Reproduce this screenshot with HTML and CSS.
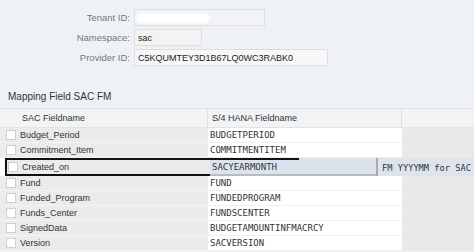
FILE: index.html
```html
<!DOCTYPE html>
<html lang="en">

<head>
    <meta charset="UTF-8">
    <title>Mapping Field SAC FM</title>
    <link rel="stylesheet" href="styles.css">
</head>

<body>
    <main>
        <section class="form">
            <div class="field">
                <label>Tenant ID:</label>
                <span class="input tenant"><span class="blur"></span></span>
            </div>
            <div class="field">
                <label>Namespace:</label>
                <span class="input namespace">sac</span>
            </div>
            <div class="field">
                <label>Provider ID:</label>
                <span class="input provider">C5KQUMTEY3D1B67LQ0WC3RABK0</span>
            </div>
        </section>

        <h1>Mapping Field SAC FM</h1>

        <section class="grid">
            <div class="row head">
                <div class="cell">SAC Fieldname</div>
                <div class="cell">S/4 HANA Fieldname</div>
                <div class="cell"></div>
            </div>
            <div class="row">
                <div class="cell"><i class="box"></i>Budget_Period</div>
                <div class="cell code">BUDGETPERIOD</div>
                <div class="cell"></div>
            </div>
            <div class="row">
                <div class="cell"><i class="box"></i>Commitment_Item</div>
                <div class="cell code">COMMITMENTITEM</div>
                <div class="cell"></div>
            </div>
            <div class="row edit">
                <div class="cell"><i class="box"></i>Created_on</div>
                <div class="cell code">SACYEARMONTH</div>
                <div class="cell code">FM YYYYMM for SAC</div>
            </div>
            <div class="row">
                <div class="cell"><i class="box"></i>Fund</div>
                <div class="cell code">FUND</div>
                <div class="cell"></div>
            </div>
            <div class="row">
                <div class="cell"><i class="box"></i>Funded_Program</div>
                <div class="cell code">FUNDEDPROGRAM</div>
                <div class="cell"></div>
            </div>
            <div class="row">
                <div class="cell"><i class="box"></i>Funds_Center</div>
                <div class="cell code">FUNDSCENTER</div>
                <div class="cell"></div>
            </div>
            <div class="row">
                <div class="cell"><i class="box"></i>SignedData</div>
                <div class="cell code">BUDGETAMOUNTINFMACRCY</div>
                <div class="cell"></div>
            </div>
            <div class="row">
                <div class="cell"><i class="box"></i>Version</div>
                <div class="cell code">SACVERSION</div>
                <div class="cell"></div>
            </div>
        </section>
    </main>
</body>

</html>
```

FILE: styles.css
```css
html,
body {
    margin: 0;
    padding: 0;
}

body {
    width: 474px;
    height: 252px;
    overflow: hidden;
    background: #eef2f6;
    font-family: 'Liberation Sans', Arial, sans-serif;
    color: #333;
}

.form {
    display: flex;
    flex-direction: column;
    gap: 3px;
    padding: 9px 0 0 0;
    height: 77px;
    box-sizing: border-box;
}

.field {
    display: flex;
    align-items: center;
    gap: 4px;
}

.field label {
    width: 130px;
    text-align: right;
    font-size: 9.5px;
    color: #777;
}

.input {
    display: flex;
    align-items: center;
    height: 17px;
    box-sizing: border-box;
    padding: 0 3px;
    border: 1px solid #dcdfe2;
    background: #f3f3f3;
    font-size: 9px;
    color: #222;
}

.tenant {
    width: 131px;
}

.blur {
    width: 70px;
    height: 6px;
    border-radius: 3px;
    background: #fff;
    box-shadow: 0 0 3px 2px #fff;
}

.namespace {
    width: 68px;
}

.provider {
    width: 194px;
    background: #f7f7f7;
}

h1 {
    margin: 0;
    padding: 14px 0 0 8px;
    height: 31px;
    box-sizing: border-box;
    font-size: 10px;
    font-weight: normal;
    color: #333;
}

.grid {
    background: #fff;
}

.row {
    display: grid;
    grid-template-columns: 208px 194px 1fr;
    height: 15px;
}

.cell {
    display: flex;
    align-items: center;
    font-size: 9px;
    white-space: nowrap;
    overflow: hidden;
}

.cell:nth-child(1) {
    padding-left: 6px;
    background: #ebebeb;
    border-bottom: 1px solid #f4f4f4;
}

.cell:nth-child(2) {
    padding-left: 2px;
    background: #fff;
    border-bottom: 1px solid #f0f0f0;
}

.cell:nth-child(3) {
    background: #e9e9e9;
}

.code {
    font-family: 'DejaVu Sans Mono', 'Liberation Mono', monospace;
    font-size: 9px;
    color: #333;
}

.box {
    width: 8px;
    height: 8px;
    margin-right: 4px;
    border: 1px solid #d0d0d0;
    background: #fff;
}

.head {
    height: 19px;
    border-top: 1px solid #dfe3e7;
}

.head .cell {
    background: #f1f3f5;
    border-bottom: 1px solid #e3e3e3;
}

.head .cell:nth-child(1) {
    padding-left: 22px;
    border-right: 1px solid #e0e0e0;
}

.head .cell:nth-child(2) {
    padding-left: 4px;
    border-right: 1px solid #e0e0e0;
}

.edit {
    position: relative;
    grid-template-columns: 210px 166px 1fr;
    height: 18px;
}

.edit::before {
    content: "";
    position: absolute;
    top: 0;
    left: 5px;
    width: 294px;
    height: 2px;
    background: #111;
}

.edit .cell:nth-child(1) {
    padding-left: 1px;
    margin-left: 5px;
    border: 2px solid #111;
    border-top: 0;
    border-right: 0;
    padding-top: 2px;
}

.edit .cell:nth-child(2) {
    padding-top: 2px;
    background: #dbe3ee;
    border-bottom: 2px solid #bbb;
}

.edit .cell:nth-child(3) {
    padding-top: 2px;
    padding-left: 4px;
    background: #dde4ee;
    border-left: 2px solid #aaa;
    font-size: 8.7px;
}
```
